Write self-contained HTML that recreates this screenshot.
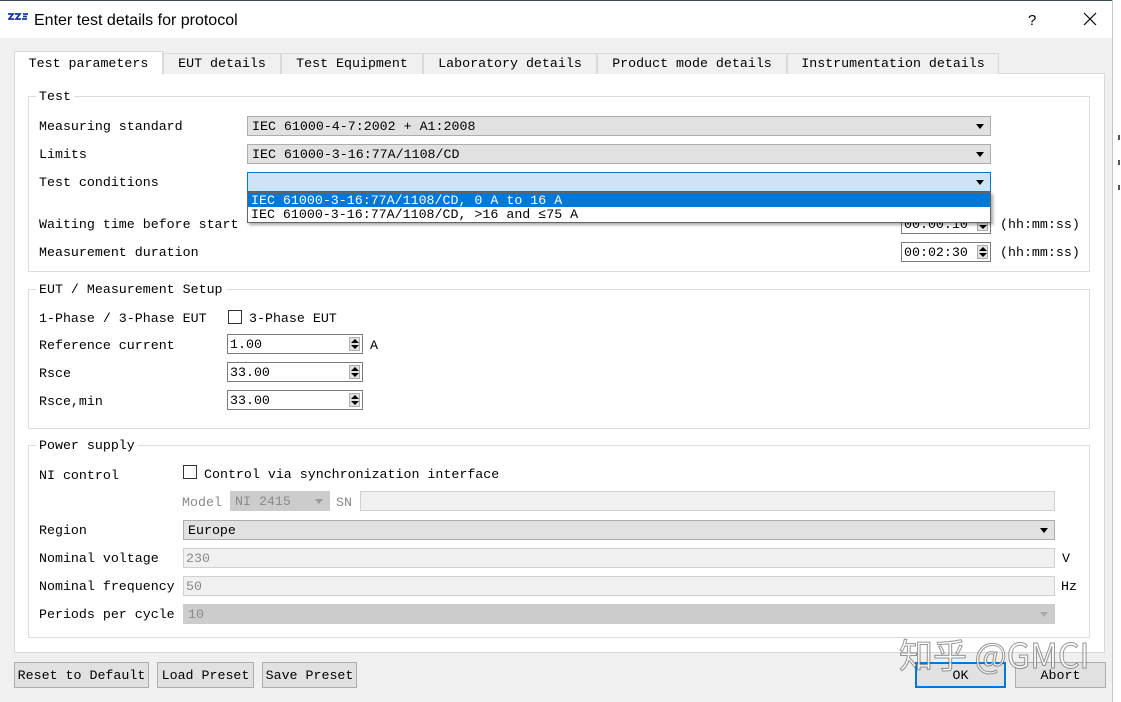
<!DOCTYPE html>
<html><head><meta charset="utf-8">
<style>
*{margin:0;padding:0;box-sizing:border-box}
body{width:1121px;height:702px;background:#f0f0f0;position:relative;overflow:hidden;font-family:"Liberation Mono","Noto Sans CJK SC",monospace;font-size:13.3px;color:#000}
.a{position:absolute}
.t{position:absolute;white-space:pre;line-height:16px;margin-top:1px}
.title{position:absolute;left:0;top:0;width:1121px;height:38px;background:#fff;border-top:1px solid #3c4a5a}
.tab{position:absolute;top:53px;height:21px;border:1px solid #d9d9d9;border-bottom:none;background:#f0f0f0;text-align:center;line-height:20px;white-space:pre}
.pane{position:absolute;left:14px;top:73px;width:1091px;height:580px;background:#fff;border:1px solid #d9d9d9}
.grp{position:absolute;border:1px solid #dcdcdc}
.gt{position:absolute;background:#fff;padding:0 3px;line-height:17px;white-space:pre}
.cb{position:absolute;background:#e1e1e1;border:1px solid #adadad;height:20px;line-height:19px;padding-left:4px;white-space:pre}
.arr{position:absolute;right:6px;top:7px;width:0;height:0;border-left:4px solid transparent;border-right:4px solid transparent;border-top:5px solid #000}
.ed{position:absolute;background:#fff;border:1px solid #7a7a7a;height:20px;line-height:19px;padding-left:2px;white-space:pre}
.sp{position:absolute;right:2px;top:2px;width:11px;height:14px;background:#e1e1e1;border:1px solid #adadad}
.sp:before{content:"";position:absolute;left:1px;top:1px;border-left:4px solid transparent;border-right:4px solid transparent;border-bottom:4px solid #000}
.sp:after{content:"";position:absolute;left:1px;bottom:1px;border-left:4px solid transparent;border-right:4px solid transparent;border-top:4px solid #000}
.chk{position:absolute;width:14px;height:14px;border:1px solid #333;background:#fff}
.btn{position:absolute;top:662px;height:26px;background:#e1e1e1;border:1px solid #adadad;line-height:26px;text-align:center;white-space:pre}
.dis{color:#8a8a8a}
</style></head><body>
<div class="title"></div>
<svg class="a" style="left:8px;top:13px" width="20" height="8" viewBox="0 0 20 8"><path d="M0 1h5l-4 5h5M7 1h5l-4 5h5M15 1h5M15 3.5h4M14 6h5" stroke="#1a3a9a" stroke-width="1.8" fill="none"/></svg>
<div class="t" style="left:34px;top:10px;font-family:'Liberation Sans',sans-serif;font-size:16px;line-height:20px">Enter test details for protocol</div>
<div class="t" style="left:1028px;top:10px;font-family:'Liberation Sans',sans-serif;font-size:15px;line-height:20px">?</div>
<svg class="a" style="left:1083px;top:12px" width="14" height="14"><path d="M1 1L13 13M13 1L1 13" stroke="#000" stroke-width="1.2"/></svg>
<div class="a" style="left:1112px;top:0;width:1px;height:702px;background:#c8c8c8"></div>
<div class="a" style="left:1113px;top:0;width:8px;height:702px;background:#fff"></div>
<div class="a" style="left:1118px;top:135px;width:2px;height:5px;background:#555"></div>
<div class="a" style="left:1118px;top:160px;width:2px;height:5px;background:#555"></div>
<div class="a" style="left:1118px;top:185px;width:2px;height:5px;background:#555"></div>

<div class="pane"></div>
<div class="tab" style="left:14px;top:51px;height:24px;width:149px;background:#fff;border-color:#d9d9d9;line-height:23px">Test parameters</div>
<div class="tab" style="left:163px;width:118px">EUT details</div>
<div class="tab" style="left:281px;width:142px">Test Equipment</div>
<div class="tab" style="left:423px;width:174px">Laboratory details</div>
<div class="tab" style="left:597px;width:190px">Product mode details</div>
<div class="tab" style="left:787px;width:212px">Instrumentation details</div>

<div class="grp" style="left:28px;top:96px;width:1062px;height:176px"></div>
<div class="gt" style="left:36px;top:88px">Test</div>
<div class="t" style="left:39px;top:118px">Measuring standard</div>
<div class="t" style="left:39px;top:146px">Limits</div>
<div class="t" style="left:39px;top:174px">Test conditions</div>
<div class="t" style="left:39px;top:216px">Waiting time before start</div>
<div class="t" style="left:39px;top:244px">Measurement duration</div>
<div class="cb" style="left:247px;top:116px;width:744px">IEC 61000-4-7:2002 + A1:2008<div class="arr"></div></div>
<div class="cb" style="left:247px;top:144px;width:744px">IEC 61000-3-16:77A/1108/CD<div class="arr"></div></div>
<div class="cb" style="left:247px;top:172px;width:744px;background:#cce4f7;border-color:#0078d7"><div class="arr"></div></div>
<div class="ed" style="left:901px;top:214px;width:90px">00:00:10<div class="sp"></div></div>
<div class="ed" style="left:901px;top:242px;width:90px">00:02:30<div class="sp"></div></div>
<div class="t" style="left:1000px;top:216px">(hh:mm:ss)</div>
<div class="t" style="left:1000px;top:244px">(hh:mm:ss)</div>
<div class="a" style="left:247px;top:192px;width:744px;height:31px;background:#fff;border:1px solid #646464;box-shadow:2px 2px 3px rgba(0,0,0,.35)">
<div class="t" style="left:0;top:0;margin-top:0;width:742px;height:14px;line-height:15px;background:#0078d7;color:#fff;padding-left:3px">IEC 61000-3-16:77A/1108/CD, 0 A to 16 A</div>
<div class="t" style="left:0;top:14px;margin-top:0;line-height:16px;padding-left:3px">IEC 61000-3-16:77A/1108/CD, &gt;16 and ≤75 A</div>
</div>

<div class="grp" style="left:28px;top:289px;width:1062px;height:140px"></div>
<div class="gt" style="left:36px;top:281px">EUT / Measurement Setup</div>
<div class="t" style="left:39px;top:310px">1-Phase / 3-Phase EUT</div>
<div class="chk" style="left:228px;top:310px"></div>
<div class="t" style="left:249px;top:310px">3-Phase EUT</div>
<div class="t" style="left:39px;top:337px">Reference current</div>
<div class="t" style="left:39px;top:365px">Rsce</div>
<div class="t" style="left:39px;top:393px">Rsce,min</div>
<div class="ed" style="left:227px;top:334px;width:136px">1.00<div class="sp"></div></div>
<div class="t" style="left:370px;top:337px">A</div>
<div class="ed" style="left:227px;top:362px;width:136px">33.00<div class="sp"></div></div>
<div class="ed" style="left:227px;top:390px;width:136px">33.00<div class="sp"></div></div>

<div class="grp" style="left:28px;top:445px;width:1062px;height:193px"></div>
<div class="gt" style="left:36px;top:437px">Power supply</div>
<div class="t" style="left:39px;top:467px">NI control</div>
<div class="chk" style="left:183px;top:465px"></div>
<div class="t" style="left:204px;top:466px">Control via synchronization interface</div>
<div class="t dis" style="left:182px;top:494px">Model</div>
<div class="cb dis" style="left:230px;top:491px;width:100px;background:#cccccc;border-color:#cccccc">NI 2415<div class="arr" style="border-top-color:#999"></div></div>
<div class="t dis" style="left:336px;top:494px">SN</div>
<div class="ed" style="left:360px;top:491px;width:695px;background:#f0f0f0;border-color:#d0d0d0"></div>
<div class="t" style="left:39px;top:522px">Region</div>
<div class="cb" style="left:183px;top:520px;width:872px">Europe<div class="arr"></div></div>
<div class="t" style="left:39px;top:550px">Nominal voltage</div>
<div class="ed dis" style="left:183px;top:548px;width:872px;background:#f0f0f0;border-color:#d0d0d0">230</div>
<div class="t" style="left:1062px;top:550px">V</div>
<div class="t" style="left:39px;top:578px">Nominal frequency</div>
<div class="ed dis" style="left:183px;top:576px;width:872px;background:#f0f0f0;border-color:#d0d0d0">50</div>
<div class="t" style="left:1061px;top:578px">Hz</div>
<div class="t" style="left:39px;top:606px">Periods per cycle</div>
<div class="cb dis" style="left:183px;top:604px;width:872px;background:#cccccc;border-color:#cccccc">10<div class="arr" style="border-top-color:#aaa"></div></div>

<div class="btn" style="left:14px;width:135px">Reset to Default</div>
<div class="btn" style="left:157px;width:97px">Load Preset</div>
<div class="btn" style="left:262px;width:95px">Save Preset</div>
<div class="btn" style="left:915px;width:91px;border:2px solid #0078d7;line-height:24px">OK</div>
<div class="btn" style="left:1015px;width:91px">Abort</div>
<div class="t" style="left:899px;top:632px;font-family:'Noto Sans CJK SC',sans-serif;font-size:34px;line-height:42px;color:rgba(255,255,255,.75);-webkit-text-stroke:1px rgba(80,80,80,.6)">知乎 @GMCI</div>
</body></html>
